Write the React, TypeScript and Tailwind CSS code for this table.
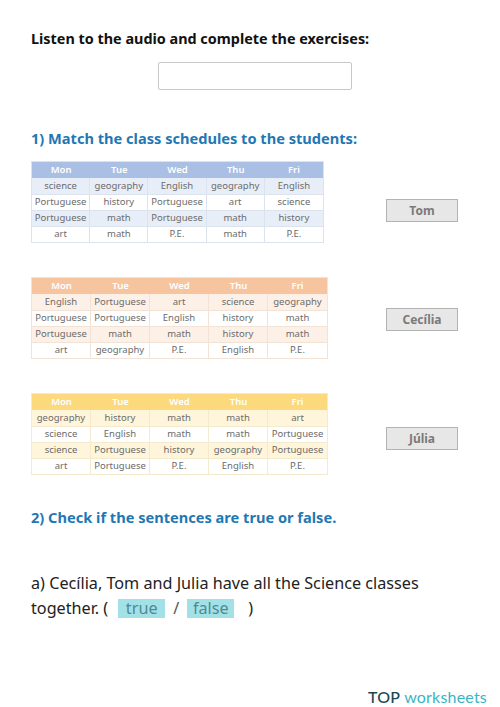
import React from 'react';

interface Theme {
  head: string;
  stripe: string;
  line: string;
}

const themes: Record<string, Theme> = {
  blue: { head: 'bg-[#a9c0e4]', stripe: 'bg-[#e8eef8]', line: 'border-[#dbe3ef]' },
  peach: { head: 'bg-[#f6c5a0]', stripe: 'bg-[#fdf0e6]', line: 'border-[#f3e2d6]' },
  yellow: { head: 'bg-[#fbd97c]', stripe: 'bg-[#fff5da]', line: 'border-[#f3ead0]' },
};

const days = ['Mon', 'Tue', 'Wed', 'Thu', 'Fri'];

const schedules: { theme: string; width: string; rows: string[][]; name: string; nameOffset: string }[] = [
  {
    theme: 'blue',
    width: 'w-[293px]',
    name: 'Tom',
    nameOffset: 'mt-[38px]',
    rows: [
      ['science', 'geography', 'English', 'geography', 'English'],
      ['Portuguese', 'history', 'Portuguese', 'art', 'science'],
      ['Portuguese', 'math', 'Portuguese', 'math', 'history'],
      ['art', 'math', 'P.E.', 'math', 'P.E.'],
    ],
  },
  {
    theme: 'peach',
    width: 'w-[297px]',
    name: 'Cecília',
    nameOffset: 'mt-[31px]',
    rows: [
      ['English', 'Portuguese', 'art', 'science', 'geography'],
      ['Portuguese', 'Portuguese', 'English', 'history', 'math'],
      ['Portuguese', 'math', 'math', 'history', 'math'],
      ['art', 'geography', 'P.E.', 'English', 'P.E.'],
    ],
  },
  {
    theme: 'yellow',
    width: 'w-[297px]',
    name: 'Júlia',
    nameOffset: 'mt-[34px]',
    rows: [
      ['geography', 'history', 'math', 'math', 'art'],
      ['science', 'English', 'math', 'math', 'Portuguese'],
      ['science', 'Portuguese', 'history', 'geography', 'Portuguese'],
      ['art', 'Portuguese', 'P.E.', 'English', 'P.E.'],
    ],
  },
];

const Schedule = ({ theme, width, rows }: { theme: Theme; width: string; rows: string[][] }) => (
  <div className={`${width} border ${theme.line} text-[9.5px] text-[#6b6b6b]`}>
    <div className={`grid grid-cols-5 h-4 ${theme.head} text-white font-semibold`}>
      {days.map((d) => (
        <div key={d} className="flex items-center justify-center">
          {d}
        </div>
      ))}
    </div>
    {rows.map((row, i) => (
      <div key={i} className={`grid grid-cols-5 h-4 ${i % 2 === 0 ? theme.stripe : 'bg-white'}`}>
        {row.map((cell, j) => (
          <div
            key={j}
            className={`flex items-center justify-center ${j < 4 ? `border-r ${theme.line}` : ''} ${
              i > 0 ? `border-t ${theme.line}` : ''
            }`}
          >
            {cell}
          </div>
        ))}
      </div>
    ))}
  </div>
);

const App = () => {
  return (
    <div className="w-[500px] h-[707px] bg-white relative font-['Noto_Sans',sans-serif] overflow-hidden">
      <div className="pl-[31px] pt-[30px]">
        <h1 className="text-[14.4px] leading-[18px] font-bold text-[#111]">
          Listen to the audio and complete the exercises:
        </h1>
        <div className="ml-[127px] mt-[14px] w-[194px] h-[28px] border border-[#c8c8c8] rounded-[2px]" />

        <h2 className="mt-[38px] text-[14.6px] leading-[20px] font-bold text-[#1f78b4]">
          1) Match the class schedules to the students:
        </h2>

        <div className="mt-[13px] flex flex-col gap-[34px]">
          {schedules.map((s) => (
            <div key={s.name} className="flex items-start">
              <Schedule theme={themes[s.theme]} width={s.width} rows={s.rows} />
              <div
                className={`${s.nameOffset} ml-auto mr-[42px] w-[72px] h-[23px] bg-[#e7e7e7] border border-[#b3b3b3] flex items-center justify-center text-[12px] font-bold text-[#7a7a7a]`}
              >
                {s.name}
              </div>
            </div>
          ))}
        </div>

        <h2 className="mt-[32px] text-[14.6px] leading-[20px] font-bold text-[#1f78b4]">
          2) Check if the sentences are true or false.
        </h2>

        <p className="mt-[44px] text-[16.2px] leading-[25px] text-[#222]">
          a) Cecília, Tom and Julia have all the Science classes
        </p>
        <div className="flex items-center text-[16.2px] leading-[25px] text-[#222]">
          <span>together. (</span>
          <span className="ml-[10px] w-[47px] h-[19px] bg-[#a3e1e8] text-[#4f8a91] flex items-center justify-center">
            true
          </span>
          <span className="mx-[8px] text-[#555]">/</span>
          <span className="w-[47px] h-[19px] bg-[#a3e1e8] text-[#4f8a91] flex items-center justify-center">
            false
          </span>
          <span className="ml-[14px]">)</span>
        </div>
      </div>

      <div className="absolute right-[13px] bottom-0 text-[16px] leading-[20px] font-['Lato',sans-serif] tracking-[0.2px]">
        <span className="text-[#1c4750] font-medium">TOP</span>{' '}
        <span className="text-[#3bb4c6]">worksheets</span>
      </div>
    </div>
  );
};

export default App;
